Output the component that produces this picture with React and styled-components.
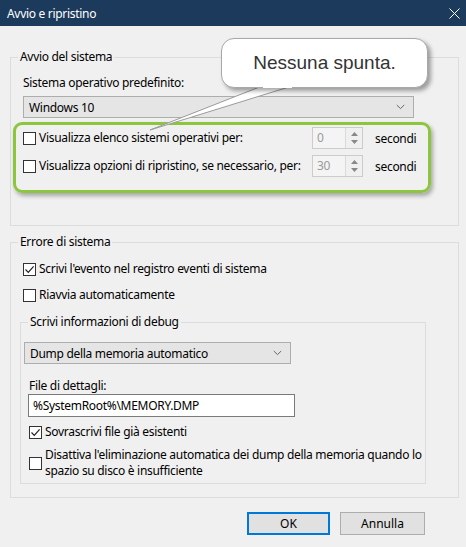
import styled, { createGlobalStyle } from 'styled-components';

const GlobalStyle = createGlobalStyle`
  html, body {
    margin: 0;
    padding: 0;
    background: #f0f0f0;
  }
  body {
    font-family: "Noto Sans", "Open Sans", sans-serif;
    font-size: 12px;
    letter-spacing: -0.3px;
    color: #000;
  }
`;

const CheckIcon = () => (
  <svg width="11" height="11" viewBox="0 0 11 11">
    <path d="M1.5 5.5 L4.3 8.3 L9.6 2.4" fill="none" stroke="#222" strokeWidth="1.2" />
  </svg>
);

const Chevron = () => (
  <svg width="9" height="6" viewBox="0 0 9 6">
    <path d="M0.8 1 L4.5 4.6 L8.2 1" fill="none" stroke="#666" strokeWidth="1" />
  </svg>
);

const Checkbox = ({ checked }) => (
  <MyBox>{checked && <CheckIcon />}</MyBox>
);

const CheckRow = ({ checked, children }) => (
  <MyCheckRow>
    <Checkbox checked={checked} />
    <span>{children}</span>
  </MyCheckRow>
);

const Spinner = ({ value }) => (
  <MySpinner>
    <span>{value}</span>
    <MySpinButtons>
      <svg width="7" height="4" viewBox="0 0 7 4">
        <path d="M0 4 L3.5 0 L7 4 Z" fill="#888" />
      </svg>
      <svg width="7" height="4" viewBox="0 0 7 4">
        <path d="M0 0 L3.5 4 L7 0 Z" fill="#888" />
      </svg>
    </MySpinButtons>
  </MySpinner>
);

export default function App() {
  return (
    <>
      <GlobalStyle />
      <MyWindow>
        <MyTitleBar>
          <span>Avvio e ripristino</span>
          <svg width="11" height="11" viewBox="0 0 11 11">
            <path d="M0.5 0.5 L10.5 10.5 M10.5 0.5 L0.5 10.5" stroke="#fff" strokeWidth="1" />
          </svg>
        </MyTitleBar>

        <MyContent>
          <MyGroup $top={23} $pb={48}>
            <legend>Avvio del sistema</legend>
            <MyFieldLabel $mt={10}>Sistema operativo predefinito:</MyFieldLabel>
            <MySelect $width={391} $mt={5}>
              <span>Windows 10</span>
              <Chevron />
            </MySelect>
            <MyTimeRow $mt={9}>
              <CheckRow>Visualizza elenco sistemi operativi per:</CheckRow>
              <Spinner value="0" />
              <MyUnit>secondi</MyUnit>
            </MyTimeRow>
            <MyTimeRow $mt={6}>
              <CheckRow>Visualizza opzioni di ripristino, se necessario, per:</CheckRow>
              <Spinner value="30" />
              <MyUnit>secondi</MyUnit>
            </MyTimeRow>
          </MyGroup>

          <MyGroup $top={8} $pb={13} $pl={9} $pr={15}>
            <legend>Errore di sistema</legend>
            <MyStack $mt={11} $pl={3}>
              <CheckRow checked>Scrivi l'evento nel registro eventi di sistema</CheckRow>
              <CheckRow>Riavvia automaticamente</CheckRow>
            </MyStack>

            <MyGroup $top={11} $pb={4} $pl={3} $pr={3}>
              <legend>Scrivi informazioni di debug</legend>
              <MySelect $width={267} $mt={12}>
                <span>Dump della memoria automatico</span>
                <Chevron />
              </MySelect>
              <MyFieldLabel $mt={14} $ml={5}>File di dettagli:</MyFieldLabel>
              <MyInput>%SystemRoot%\MEMORY.DMP</MyInput>
              <MyStack $mt={7} $pl={5} $gap={7}>
                <CheckRow checked>Sovrascrivi file già esistenti</CheckRow>
                <CheckRow>
                  Disattiva l'eliminazione automatica dei dump della memoria quando lo
                  <br />
                  spazio su disco è insufficiente
                </CheckRow>
              </MyStack>
            </MyGroup>
          </MyGroup>

          <MyButtonBar>
            <MyButton $primary>OK</MyButton>
            <MyButton>Annulla</MyButton>
          </MyButtonBar>
        </MyContent>

        <MyHighlight />

        <MyTail width="160" height="50" viewBox="0 0 160 50">
          <path d="M4 46 L116 2 L146 2 Z" fill="#fff" stroke="#9a9a9a" strokeWidth="1" />
        </MyTail>
        <MyBubble>Nessuna spunta.</MyBubble>
        <MyTailJoin />
      </MyWindow>
    </>
  );
}

const MyWindow = styled.div`
  position: relative;
  width: 466px;
  height: 547px;
  overflow: hidden;
  background: #f0f0f0;
`;

const MyTitleBar = styled.div`
  display: flex;
  align-items: center;
  justify-content: space-between;
  height: 26px;
  padding: 0 6px 0 7px;
  background: #1b3a5c;
  color: #fff;
  font-size: 12px;
`;

const MyContent = styled.div`
  display: flex;
  flex-direction: column;
  padding: 0 7px 0 10px;
`;

const MyGroup = styled.fieldset`
  display: flex;
  flex-direction: column;
  align-items: flex-start;
  margin: ${(p) => p.$top}px 0 0 0;
  padding: 0 ${(p) => p.$pr ?? 0}px ${(p) => p.$pb}px ${(p) => p.$pl ?? 12}px;
  border: 1px solid #dcdcdc;
  min-width: 0;

  & > legend {
    margin-left: ${(p) => (p.$pl === 3 ? 4 : p.$pl === 9 ? -2 : -5)}px;
    padding: 0 2px;
    line-height: 16px;
    color: #000;
  }
`;

const MyFieldLabel = styled.div`
  margin-top: ${(p) => p.$mt}px;
  margin-left: ${(p) => p.$ml ?? 0}px;
  line-height: 16px;
`;

const MySelect = styled.div`
  box-sizing: border-box;
  display: flex;
  align-items: center;
  justify-content: space-between;
  width: ${(p) => p.$width}px;
  height: 22px;
  margin-top: ${(p) => p.$mt}px;
  padding: 0 8px 0 5px;
  background: #e5e5e5;
  border: 1px solid #adadad;
`;

const MyTimeRow = styled.div`
  display: grid;
  grid-template-columns: 289px 51px auto;
  align-items: center;
  height: 22px;
  margin-top: ${(p) => p.$mt}px;
`;

const MyUnit = styled.span`
  margin-left: 12px;
`;

const MyCheckRow = styled.label`
  display: flex;
  align-items: center;
  gap: 3px;
  line-height: 16px;
  white-space: nowrap;
`;

const MyBox = styled.span`
  box-sizing: border-box;
  display: flex;
  align-items: center;
  justify-content: center;
  flex: none;
  width: 13px;
  height: 13px;
  background: #fff;
  border: 1px solid #333;
`;

const MySpinner = styled.div`
  box-sizing: border-box;
  display: flex;
  align-items: stretch;
  justify-content: space-between;
  height: 22px;
  padding-left: 4px;
  background: #f4f4f4;
  border: 1px solid #cccccc;
  color: #9a9a9a;

  & > span {
    line-height: 20px;
  }
`;

const MySpinButtons = styled.div`
  display: flex;
  flex-direction: column;
  align-items: center;
  justify-content: space-evenly;
  width: 16px;
  border-left: 1px solid #d9d9d9;
  background: #f0f0f0;
`;

const MyStack = styled.div`
  display: flex;
  flex-direction: column;
  gap: ${(p) => p.$gap ?? 10}px;
  margin-top: ${(p) => p.$mt}px;
  padding-left: ${(p) => p.$pl ?? 0}px;
`;

const MyInput = styled.div`
  box-sizing: border-box;
  width: 267px;
  height: 23px;
  margin-left: 4px;
  padding: 0 4px;
  line-height: 21px;
  background: #fff;
  border: 1px solid #7a7a7a;
`;

const MyButtonBar = styled.div`
  display: flex;
  justify-content: flex-end;
  gap: 10px;
  margin-top: 14px;
  padding-right: 34px;
`;

const MyButton = styled.button`
  box-sizing: border-box;
  width: ${(p) => (p.$primary ? 83 : 85)}px;
  height: 23px;
  padding: 0;
  font: inherit;
  color: #000;
  background: #e1e1e1;
  border: ${(p) => (p.$primary ? '2px solid #0078d7' : '1px solid #adadad')};
`;

const MyHighlight = styled.div`
  position: absolute;
  left: 13px;
  top: 122px;
  width: 418px;
  height: 71px;
  box-sizing: border-box;
  border: 3px solid #8cc63f;
  border-radius: 9px;
  box-shadow: 2px 3px 4px rgba(0, 0, 0, 0.3);
  pointer-events: none;
`;

const MyBubble = styled.div`
  position: absolute;
  left: 221px;
  top: 38px;
  width: 207px;
  height: 50px;
  box-sizing: border-box;
  display: flex;
  align-items: center;
  justify-content: center;
  background: #fff;
  border: 1px solid #a8a8a8;
  border-radius: 13px;
  box-shadow: 3px 3px 4px rgba(0, 0, 0, 0.35);
  font-family: "Liberation Sans", Arial, sans-serif;
  font-size: 19px;
  letter-spacing: 0;
  color: #333;
`;

const MyTail = styled.svg`
  position: absolute;
  left: 146px;
  top: 84px;
  overflow: visible;
`;

const MyTailJoin = styled.div`
  position: absolute;
  left: 263px;
  top: 84px;
  width: 29px;
  height: 4px;
  background: #fff;
`;
